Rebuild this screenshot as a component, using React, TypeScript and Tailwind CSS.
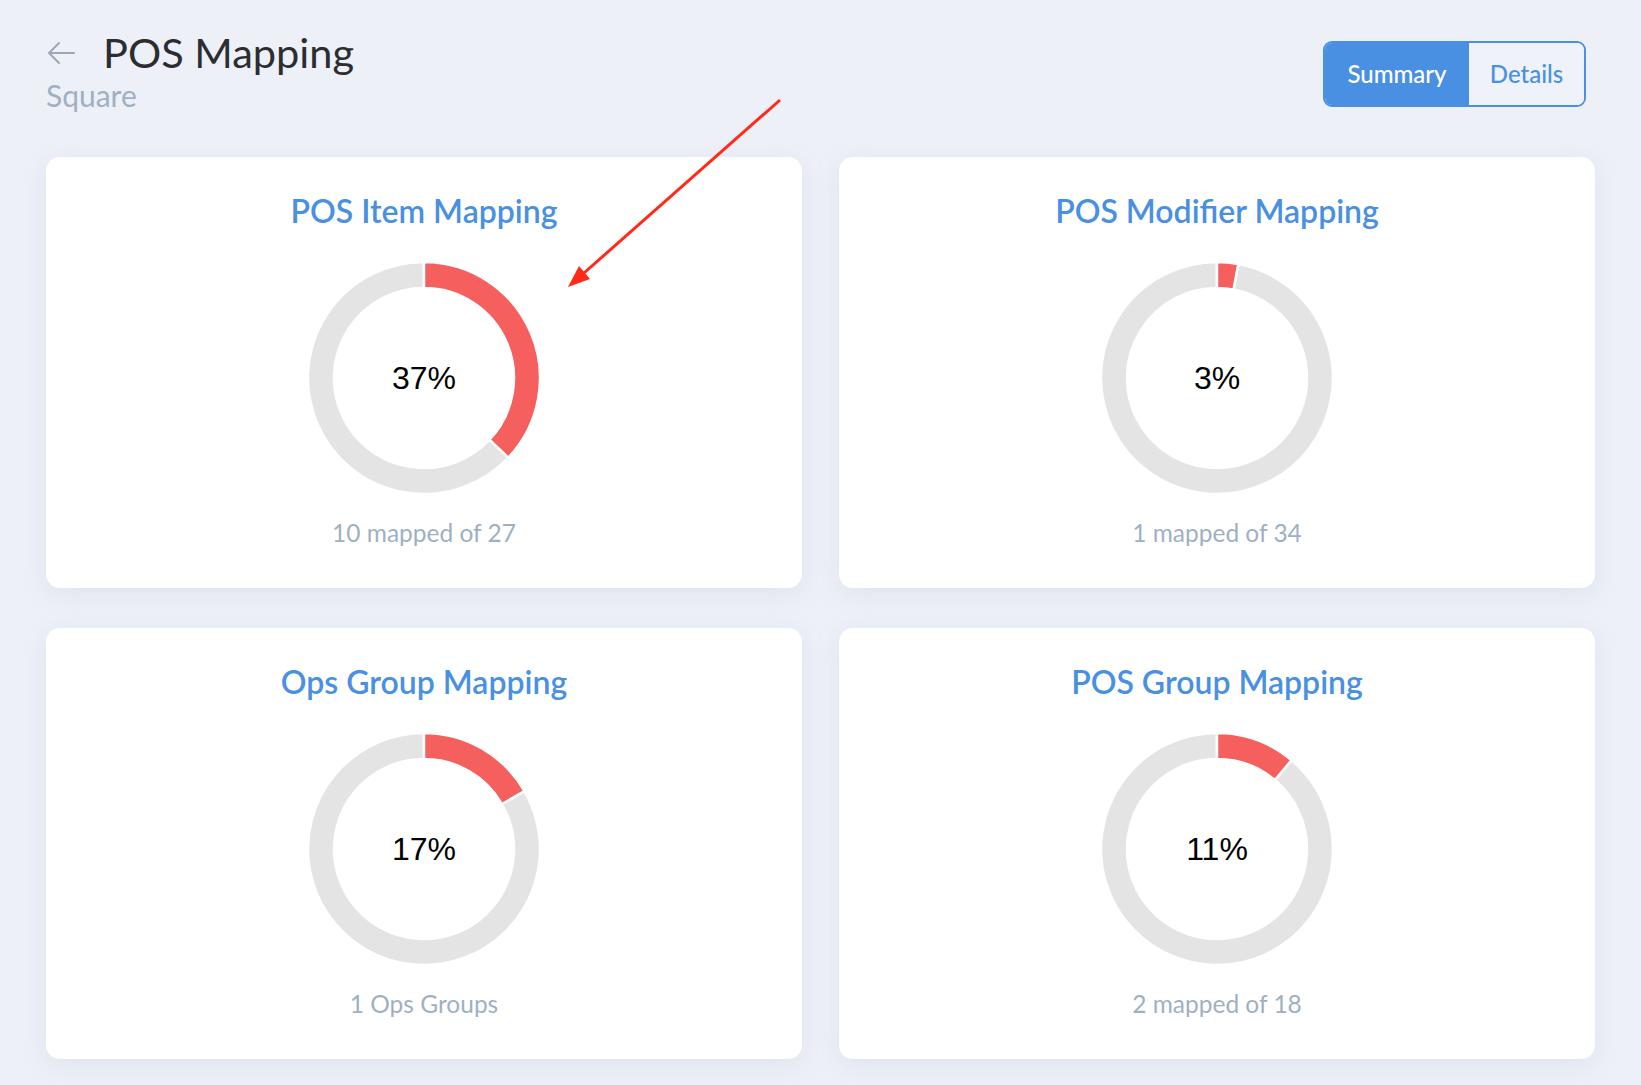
import React from 'react';

type Chart = { title: string; pct: number; label: string };

const charts: Chart[] = [
  { title: 'POS Item Mapping', pct: 10 / 27, label: '10 mapped of 27' },
  { title: 'POS Modifier Mapping', pct: 1 / 34, label: '1 mapped of 34' },
  { title: 'Ops Group Mapping', pct: 1 / 6, label: '1 Ops Groups' },
  { title: 'POS Group Mapping', pct: 2 / 18, label: '2 mapped of 18' },
];

const SIZE = 232;
const C = SIZE / 2;
const R = 116;
const r = 90;

function pt(a: number, rad: number) {
  const t = a * Math.PI * 2;
  return `${(C + rad * Math.sin(t)).toFixed(2)} ${(C - rad * Math.cos(t)).toFixed(2)}`;
}

function sector(start: number, end: number) {
  const large = end - start > 0.5 ? 1 : 0;
  return `M ${pt(start, R)} A ${R} ${R} 0 ${large} 1 ${pt(end, R)} L ${pt(end, r)} A ${r} ${r} 0 ${large} 0 ${pt(start, r)} Z`;
}

function Donut({ pct }: { pct: number }) {
  return (
    <div className="relative w-[232px] h-[232px]">
      <svg width={SIZE} height={SIZE} viewBox={`0 0 ${SIZE} ${SIZE}`}>
        <path d={sector(pct, 0.99999)} fill="#e4e4e4" stroke="#ffffff" strokeWidth="2.5" />
        <path d={sector(0, pct)} fill="#f55f5d" stroke="#ffffff" strokeWidth="2.5" />
      </svg>
      <div className="absolute inset-0 flex items-center justify-center text-[32px] text-black font-['Liberation_Sans',Arial,sans-serif]">
        {Math.round(pct * 100)}%
      </div>
    </div>
  );
}

function MappingCard({ chart }: { chart: Chart }) {
  return (
    <div className="bg-white rounded-[14px] h-[431px] shadow-[0_6px_24px_rgba(160,172,200,0.18)] flex flex-col items-center pt-[34px]">
      <h2 className="text-[32px] leading-[40px] font-semibold text-[#4a90e2]">{chart.title}</h2>
      <div className="mt-[31px]">
        <Donut pct={chart.pct} />
      </div>
      <p className="mt-[24px] text-[24.5px] leading-[30px] text-[#a0b0c3]">{chart.label}</p>
    </div>
  );
}

export default function App() {
  return (
    <div className="relative min-h-[1085px] bg-[#edf0f7] px-[46px] pt-[28px] pb-[26px] font-['Lato','Noto_Sans',sans-serif]">
      {/* Header */}
      <div className="flex justify-between items-start">
        <div>
          <div className="flex items-center">
            <svg width="30" height="26" viewBox="0 0 30 26" className="mr-[27px] mt-[2px]">
              <path d="M28 13 H3 M13 3 L3 13 L13 23" fill="none" stroke="#9aa8ba" strokeWidth="2" strokeLinecap="round" strokeLinejoin="round" />
            </svg>
            <h1 className="text-[41.5px] leading-[48px] text-[#2b2d31]">POS Mapping</h1>
          </div>
          <p className="mt-[3px] text-[30px] leading-[32px] text-[#a0b0c3]">Square</p>
        </div>
        <div className="mt-[13px] mr-[9px] flex h-[66px] border-2 border-[#4a90e2] rounded-[9px] overflow-hidden">
          <button className="w-[144px] bg-[#4a90e2] text-white text-[24px] font-medium">Summary</button>
          <button className="w-[115px] bg-[#eff2f8] text-[#4a90e2] text-[24px] font-medium">Details</button>
        </div>
      </div>

      {/* Cards */}
      <div className="mt-[46px] grid grid-cols-2 gap-x-[37px] gap-y-[40px]">
        {charts.map((c) => (
          <MappingCard key={c.title} chart={c} />
        ))}
      </div>

      {/* Annotation arrow */}
      <svg className="absolute left-0 top-0 pointer-events-none" width="1641" height="400">
        <line x1="780" y1="100" x2="584" y2="273" stroke="#ff2a1a" strokeWidth="3" />
        <polygon points="568,287 590,279 579,266" fill="#ff2a1a" />
      </svg>
    </div>
  );
}
